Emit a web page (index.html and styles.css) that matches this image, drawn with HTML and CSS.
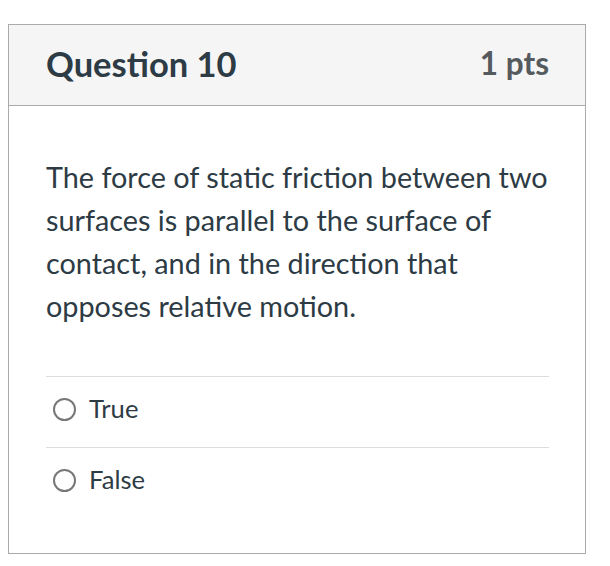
FILE: index.html
```html
<!DOCTYPE html>
<html>
<head>
<meta charset="utf-8">
<link rel="stylesheet" href="styles.css">
</head>
<body>
<div class="card">
  <div class="header">
    <h2 class="title">Question 10</h2>
    <span class="pts">1 pts</span>
  </div>
  <div class="body">
    <p class="text">The force of static friction between two surfaces is parallel to the surface of contact, and in the direction that opposes relative motion.</p>
    <div class="answers">
      <div class="answer"><span class="radio"></span><span class="label">True</span></div>
      <div class="answer"><span class="radio"></span><span class="label">False</span></div>
    </div>
  </div>
</div>
</body>
</html>
```
FILE: styles.css
```css
html, body { margin: 0; padding: 0; background: #fff; }
body { padding: 24px 24px 0 8px; font-family: Lato, "Noto Sans", sans-serif; color: #2d3b45; }
.card { width: 576px; border: 1px solid #aaaaaa; box-sizing: content-box; height: 528px; }
.header { background: #f5f5f5; border-bottom: 1px solid #aaaaaa; height: 81px; box-sizing: border-box; display: flex; align-items: center; justify-content: space-between; padding: 0 36px 2px 37px; }
.title { margin: 0; font-size: 34.5px; font-weight: 700; color: #2d3b45; line-height: 1; }
.pts { font-size: 31.5px; font-weight: 700; color: #555a5e; line-height: 1; }
.body { padding: 50px 36px 0 37px; }
.text { margin: 0; font-size: 28.8px; line-height: 43px; }
.answers { margin-top: 48px; }
.answer { border-top: 1px solid #dddddd; height: 70px; box-sizing: content-box; display: flex; align-items: center; }
.radio { flex: none; width: 19px; height: 19px; border: 2px solid #777; border-radius: 50%; margin-left: 7px; margin-right: 13px; margin-top: -6px; }
.label { font-size: 25.6px; margin-top: -9px; }
```
